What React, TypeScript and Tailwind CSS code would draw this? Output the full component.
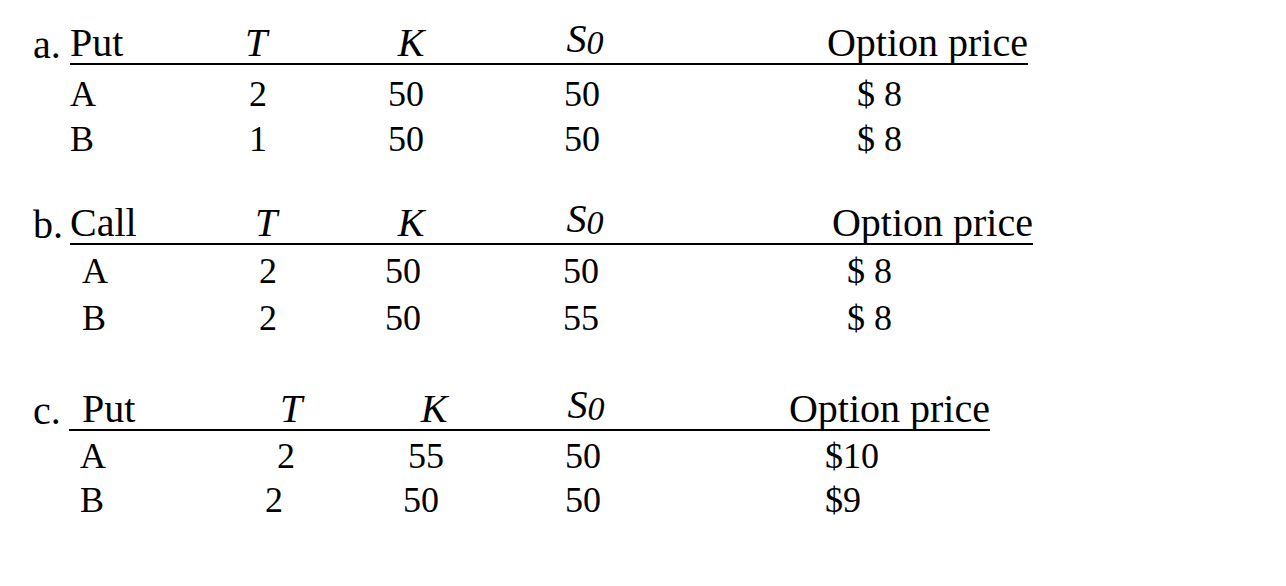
type Row = {
  name: string;
  nameCls: string;
  t: string;
  tCls: string;
  k: string;
  kCls: string;
  s: string;
  sCls: string;
  p: string;
  pCls: string;
};

type Part = {
  label: string;
  kind: string;
  kindCls: string;
  wrap: string;
  cols: string;
  body: string;
  rows: Row[];
};

const parts: Part[] = [
  {
    label: "a.",
    kind: "Put",
    kindCls: "",
    wrap: "mt-[19px]",
    cols: "grid-cols-[37px_136px_100px_210px_138px_374px]",
    body: "mt-[7px] leading-[45px]",
    rows: [
      { name: "A", nameCls: "", t: "2", tCls: "pl-[4px]", k: "50", kCls: "pr-[10px]", s: "50", sCls: "pr-[6px]", p: "$ 8", pCls: "pl-[203px]" },
      { name: "B", nameCls: "", t: "1", tCls: "pl-[4px]", k: "50", kCls: "pr-[10px]", s: "50", sCls: "pr-[6px]", p: "$ 8", pCls: "pl-[203px]" },
    ],
  },
  {
    label: "b.",
    kind: "Call",
    kindCls: "",
    wrap: "mt-[37px]",
    cols: "grid-cols-[37px_146px_100px_190px_158px_369px]",
    body: "mt-[3px] leading-[47px]",
    rows: [
      { name: "A", nameCls: "pl-[12px]", t: "2", tCls: "pl-[4px]", k: "50", kCls: "pr-[16px]", s: "50", sCls: "pr-[8px]", p: "$ 8", pCls: "pl-[183px]" },
      { name: "B", nameCls: "pl-[12px]", t: "2", tCls: "pl-[4px]", k: "50", kCls: "pr-[16px]", s: "55", sCls: "pr-[8px]", p: "$ 8", pCls: "pl-[183px]" },
    ],
  },
  {
    label: "c.",
    kind: "Put",
    kindCls: "pl-[13px]",
    wrap: "mt-[43px]",
    cols: "grid-cols-[36px_172px_100px_186px_118px_345px]",
    body: "mt-[3px] leading-[44px]",
    rows: [
      { name: "A", nameCls: "pl-[11px]", t: "2", tCls: "pr-[10px]", k: "55", kCls: "pr-[16px]", s: "50", sCls: "pr-[6px]", p: "$10", pCls: "pl-[180px]" },
      { name: "B", nameCls: "pl-[11px]", t: "2", tCls: "pr-[34px]", k: "50", kCls: "pr-[26px]", s: "50", sCls: "pr-[6px]", p: "$9", pCls: "pl-[180px]" },
    ],
  },
];

const Table = ({ part }: { part: Part }) => {
  return (
    <div className={part.wrap}>
      {/* header with the rule under it */}
      <div className={`grid ${part.cols} items-end text-[40px] leading-[40px]`}>
        <div>{part.label}</div>
        <div className={`border-b-2 border-black ${part.kindCls}`}>{part.kind}</div>
        <div className="border-b-2 border-black text-center italic">T</div>
        <div className="border-b-2 border-black text-center italic">K</div>
        <div className="border-b-2 border-black text-center italic">
          S<span className="text-[34px] align-[-2px]">0</span>
        </div>
        <div className="border-b-2 border-black text-right">Option price</div>
      </div>
      <div className={`text-[36px] ${part.body}`}>
        {part.rows.map((r) => (
          <div key={r.name} className={`grid ${part.cols}`}>
            <div></div>
            <div className={r.nameCls}>{r.name}</div>
            <div className={`text-center ${r.tCls}`}>{r.t}</div>
            <div className={`text-center ${r.kCls}`}>{r.k}</div>
            <div className={`text-center ${r.sCls}`}>{r.s}</div>
            <div className={`whitespace-pre ${r.pCls}`}>{r.p}</div>
          </div>
        ))}
      </div>
    </div>
  );
};

export default function App() {
  return (
    <div className="w-[1286px] h-[586px] overflow-hidden bg-white pl-[33px] pt-px text-black font-['Liberation_Serif','Times_New_Roman',serif]">
      <div className="-mt-px">
        {parts.map((p) => (
          <Table key={p.label} part={p} />
        ))}
      </div>
    </div>
  );
}
